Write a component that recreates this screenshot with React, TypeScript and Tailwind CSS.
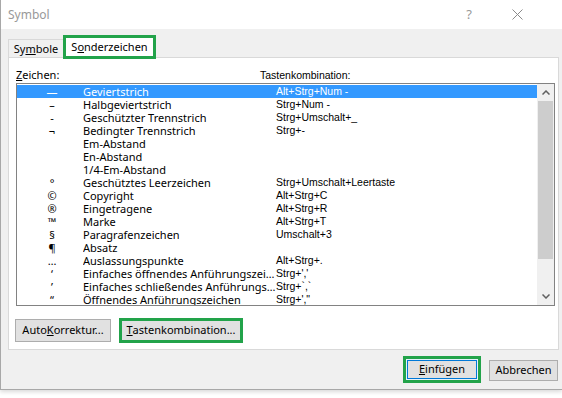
import React from 'react';

type Row = { sym: string; name: string; keys: string };

const rows: Row[] = [
  { sym: '—', name: 'Geviertstrich', keys: 'Alt+Strg+Num -' },
  { sym: '–', name: 'Halbgeviertstrich', keys: 'Strg+Num -' },
  { sym: '-', name: 'Geschützter Trennstrich', keys: 'Strg+Umschalt+_' },
  { sym: '¬', name: 'Bedingter Trennstrich', keys: 'Strg+-' },
  { sym: '', name: 'Em-Abstand', keys: '' },
  { sym: '', name: 'En-Abstand', keys: '' },
  { sym: '', name: '1/4-Em-Abstand', keys: '' },
  { sym: '°', name: 'Geschütztes Leerzeichen', keys: 'Strg+Umschalt+Leertaste' },
  { sym: '©', name: 'Copyright', keys: 'Alt+Strg+C' },
  { sym: '®', name: 'Eingetragene', keys: 'Alt+Strg+R' },
  { sym: '™', name: 'Marke', keys: 'Alt+Strg+T' },
  { sym: '§', name: 'Paragrafenzeichen', keys: 'Umschalt+3' },
  { sym: '¶', name: 'Absatz', keys: '' },
  { sym: '…', name: 'Auslassungspunkte', keys: 'Alt+Strg+.' },
  { sym: '‘', name: 'Einfaches öffnendes Anführungszeichen', keys: "Strg+','" },
  { sym: '’', name: 'Einfaches schließendes Anführungszeichen', keys: 'Strg+`,`' },
  { sym: '“', name: 'Öffnendes Anführungszeichen', keys: 'Strg+\',"' },
];

const Chevron = ({ up }: { up?: boolean }) => (
  <svg width="8" height="5" viewBox="0 0 8 5">
    <path
      d={up ? 'M0.5 4.5 L4 1 L7.5 4.5' : 'M0.5 0.5 L4 4 L7.5 0.5'}
      fill="none"
      stroke="#606060"
      strokeWidth="1.5"
    />
  </svg>
);

export default function App() {
  return (
    <div className="w-[562px] h-[398px] bg-white overflow-hidden font-['Noto_Sans',sans-serif] text-[11px] text-black">
      <div className="h-[390px] flex flex-col border-l border-b border-[#a8a8a8] shadow-[0_2px_4px_rgba(0,0,0,0.15)]">
        {/* Title bar */}
        <div className="h-[29px] shrink-0 bg-white flex items-center pl-[7px] text-[#999999] text-[12px]">
          <span>Symbol</span>
          <span className="ml-auto mr-[40px] text-[13px]">?</span>
          <svg width="11" height="11" viewBox="0 0 11 11" className="mr-[39px]">
            <path d="M0.5 0.5 L10.5 10.5 M10.5 0.5 L0.5 10.5" stroke="#8a8a8a" strokeWidth="1" />
          </svg>
        </div>

        <div className="flex-1 bg-[#f0f0f0] flex flex-col">
          {/* Tabs */}
          <div className="h-[28px] flex items-end pl-[7px]">
            <div className="w-[56px] h-[18px] border border-b-0 border-[#d9d9d9] flex items-center justify-center leading-none">
              Sy<u>m</u>bole
            </div>
            <div className="w-[93px] h-[24px] -ml-[1px] -mb-[2px] relative z-10 bg-white border-[3px] border-[#22a34a] flex items-center justify-center leading-none pb-[1px]">
              S<u>o</u>nderzeichen
            </div>
          </div>

          {/* Panel */}
          <div className="ml-[7px] w-[551px] h-[293px] bg-white border border-[#d9d9d9] flex flex-col">
            <div className="flex pl-[7px] pt-[10px] h-[25px] leading-[14px]">
              <span className="w-[244px]">
                <u>Z</u>eichen:
              </span>
              <span className="font-['Liberation_Sans',sans-serif] text-[10.5px]">Tastenkombination:</span>
            </div>

            <div className="ml-[7px] w-[539px] h-[223px] border border-[#828282] flex overflow-hidden">
              <div className="flex-1 pt-[1px] overflow-hidden">
                {rows.map((r, i) => (
                  <div
                    key={i}
                    className={`h-[13px] flex items-start leading-[13px] ${i === 0 ? 'bg-[#3399ff] text-white' : ''}`}
                  >
                    <span className="w-[66px] shrink-0 flex">
                      <span className="ml-[26px] w-[18px] text-center">{r.sym}</span>
                    </span>
                    <span className="w-[193px] h-[16px] shrink-0 truncate relative z-10">{r.name}</span>
                    <span className="font-['Liberation_Sans',sans-serif] text-[10.5px] whitespace-nowrap">{r.keys}</span>
                  </div>
                ))}
              </div>
              <div className="w-[17px] shrink-0 bg-[#f0f0f0] flex flex-col">
                <div className="h-[17px] flex items-center justify-center">
                  <Chevron up />
                </div>
                <div className="h-[158px] bg-[#cdcdcd] mx-[1px]" />
                <div className="flex-1" />
                <div className="h-[17px] flex items-center justify-center">
                  <Chevron />
                </div>
              </div>
            </div>

            <div className="flex items-start pl-[6px] mt-[12px] gap-[8px]">
              <div className="mt-[1px] w-[96px] h-[23px] bg-[#e1e1e1] border border-[#adadad] flex items-center justify-center">
                Auto<u>K</u>orrektur...
              </div>
              <div className="w-[124px] h-[25px] border-[3px] border-[#22a34a] bg-[#e1e1e1] flex items-center justify-center">
                <u>T</u>astenkombination...
              </div>
            </div>
          </div>

          {/* Footer */}
          <div className="flex justify-end items-start pr-[4px] mt-[6px] gap-[8px]">
            <div className="w-[78px] h-[27px] border-[3px] border-[#22a34a] bg-[#e5f1fb] flex items-center justify-center">
              <div className="w-[70px] h-[19px] border border-[#0078d7] bg-[#e1e1e1] flex items-center justify-center">
                <u>E</u>infügen
              </div>
            </div>
            <div className="mt-[4px] w-[69px] h-[21px] bg-[#e1e1e1] border border-[#adadad] flex items-center justify-center">
              Abbrechen
            </div>
          </div>
        </div>
      </div>
    </div>
  );
}
